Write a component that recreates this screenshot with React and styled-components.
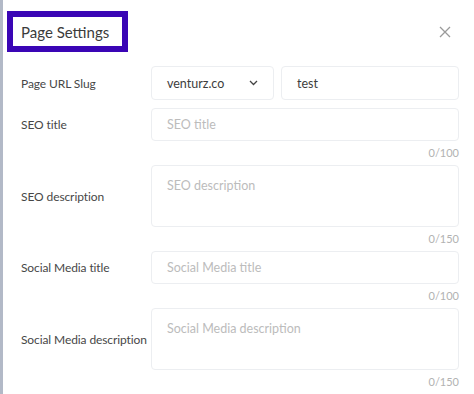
import React from 'react'
import styled, { createGlobalStyle } from 'styled-components'

const GlobalStyle = createGlobalStyle`
  html, body {
    margin: 0;
    padding: 0;
    background: #fff;
  }
  * {
    box-sizing: border-box;
  }
`;

const Modal = styled.div`
  width: 474px;
  height: 394px;
  overflow: hidden;
  background: #fff;
  border-left: 3px solid #b2b9c7;
  padding: 11px 15px 0 4px;
  font-family: Lato, "Noto Sans", sans-serif;
  color: #454545;
`;

const Header = styled.div`
  display: flex;
  justify-content: space-between;
  align-items: center;
  margin-bottom: 14px;
`;

const TitleBox = styled.div`
  border: 6px solid #3a05b5;
  padding: 0 13px 0 8px;
  height: 41px;
  display: flex;
  align-items: center;
  font-size: 15px;
  color: #3b3b3b;
`;

const Close = styled.button`
  border: none;
  background: none;
  padding: 0;
  margin-right: 7px;
  width: 14px;
  height: 14px;
  display: flex;
  align-items: center;
  justify-content: center;
  cursor: pointer;
`;

const Row = styled.div`
  display: flex;
  align-items: center;
  margin-bottom: ${p => p.$gap}px;
`;

const Label = styled.div`
  width: 144px;
  padding-left: 14px;
  font-size: 12px;
  letter-spacing: -0.1px;
  color: #474747;
  white-space: nowrap;
  flex-shrink: 0;
`;

const Controls = styled.div`
  flex: 1;
  display: flex;
  gap: 7px;
`;

const Box = styled.div`
  border: 1px solid #eceef1;
  border-radius: 4px;
  height: ${p => p.$h}px;
  padding: ${p => (p.$area ? '12px 15px' : '0 15px')};
  display: flex;
  align-items: ${p => (p.$area ? 'flex-start' : 'center')};
  justify-content: space-between;
  font-size: 12.5px;
  color: ${p => (p.$filled ? '#3d3d3d' : '#bcbcbc')};
  flex: ${p => p.$grow || 1};
`;

const Counter = styled.div`
  text-align: right;
  font-size: 11px;
  line-height: 16px;
  color: #b2b2b2;
  margin: 4px 0 4px;
`;

const Chevron = () => (
  <svg width="9" height="6" viewBox="0 0 9 6">
    <path d="M1 1l3.5 3.5L8 1" fill="none" stroke="#444" strokeWidth="1.3" />
  </svg>
);

const CloseIcon = () => (
  <svg width="12" height="12" viewBox="0 0 12 12">
    <path d="M1 1l10 10M11 1L1 11" stroke="#9a9a9a" strokeWidth="1.3" />
  </svg>
);

const fields = [
  { label: 'SEO title', placeholder: 'SEO title', h: 33, area: false, max: 100 },
  { label: 'SEO description', placeholder: 'SEO description', h: 62, area: true, max: 150 },
  { label: 'Social Media title', placeholder: 'Social Media title', h: 33, area: false, max: 100 },
  { label: 'Social Media description', placeholder: 'Social Media description', h: 62, area: true, max: 150 },
];

const App = () => {
  return (
    <>
      <GlobalStyle />
      <Modal>
        <Header>
          <TitleBox>Page Settings</TitleBox>
          <Close aria-label="Close">
            <CloseIcon />
          </Close>
        </Header>

        <Row $gap={8}>
          <Label>Page URL Slug</Label>
          <Controls>
            <Box $h={34} $grow="0 0 123px" $filled>
              venturz.co
              <Chevron />
            </Box>
            <Box $h={34} $filled>test</Box>
          </Controls>
        </Row>

        {fields.map(f => (
          <div key={f.label}>
            <Row $gap={0}>
              <Label>{f.label}</Label>
              <Controls>
                <Box $h={f.h} $area={f.area}>{f.placeholder}</Box>
              </Controls>
            </Row>
            <Counter>0/{f.max}</Counter>
          </div>
        ))}
      </Modal>
    </>
  );
};

export default App;
